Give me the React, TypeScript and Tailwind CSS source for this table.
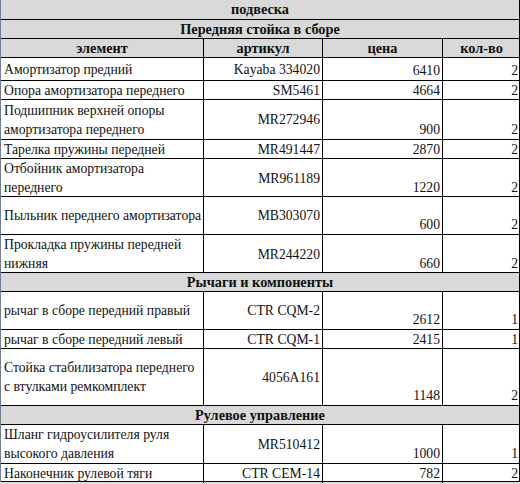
type Row =
  | { kind: "title"; text: string; h: number }
  | { kind: "head"; h: number }
  | { kind: "item"; name: string; art: string; price: string; qty: string; h: number };

const rows: Row[] = [
  { kind: "title", text: "подвеска", h: 20 },
  { kind: "title", text: "Передняя стойка в сборе", h: 19 },
  { kind: "head", h: 19 },
  { kind: "item", name: "Амортизатор предний", art: "Kayaba 334020", price: "6410", qty: "2", h: 23 },
  { kind: "item", name: "Опора амортизатора переднего", art: "SM5461", price: "4664", qty: "2", h: 19 },
  { kind: "item", name: "Подшипник верхней опоры\nамортизатора переднего", art: "MR272946", price: "900", qty: "2", h: 40 },
  { kind: "item", name: "Тарелка пружины передней", art: "MR491447", price: "2870", qty: "2", h: 19 },
  { kind: "item", name: "Отбойник амортизатора\nпереднего", art: "MR961189", price: "1220", qty: "2", h: 38 },
  { kind: "item", name: "Пыльник переднего амортизатора", art: "MB303070", price: "600", qty: "2", h: 38 },
  { kind: "item", name: "Прокладка пружины передней\nнижняя", art: "MR244220", price: "660", qty: "2", h: 38 },
  { kind: "title", text: "Рычаги и компоненты", h: 19 },
  { kind: "item", name: "рычаг в сборе передний правый", art: "CTR CQM-2", price: "2612", qty: "1", h: 38 },
  { kind: "item", name: "рычаг в сборе передний левый", art: "CTR CQM-1", price: "2415", qty: "1", h: 19 },
  { kind: "item", name: "Стойка стабилизатора переднего\nс втулками ремкомплект", art: "4056A161", price: "1148", qty: "2", h: 57 },
  { kind: "title", text: "Рулевое управление", h: 19 },
  { kind: "item", name: "Шланг гидроусилителя руля\nвысокого давления", art: "MR510412", price: "1000", qty: "1", h: 39 },
  { kind: "item", name: "Наконечник рулевой тяги", art: "CTR CEM-14", price: "782", qty: "2", h: 18 },
];

const grid = "grid grid-cols-[203px_119px_120px_77px]";

export default function App() {
  return (
    <div
      className="min-h-[484px] w-[520px] bg-[#dcdcdc] text-[13.7px] leading-[19px] text-[#111]"
      style={{ fontFamily: '"Liberation Serif", "Times New Roman", serif' }}
    >
      <div className="border-l border-r border-l-[#6f7f90] border-r-black">
        {rows.map((r, i) => {
          if (r.kind === "title") {
            return (
              <div
                key={i}
                className="flex items-center justify-center border-b border-black bg-[#d9d9d9] text-[14.3px] font-bold"
                style={{ height: r.h }}
              >
                {r.text}
              </div>
            );
          }
          if (r.kind === "head") {
            return (
              <div
                key={i}
                className={`${grid} border-b border-black bg-[#d9d9d9] text-[14.3px] font-bold`}
                style={{ height: r.h }}
              >
                <div className="flex items-center justify-center border-r border-black">элемент</div>
                <div className="flex items-center justify-center border-r border-black">артикул</div>
                <div className="flex items-center justify-center border-r border-black">цена</div>
                <div className="flex items-center justify-center">кол-во</div>
              </div>
            );
          }
          return (
            <div
              key={i}
              className={`${grid} border-b border-black bg-white`}
              style={{ height: r.h }}
            >
              <div className="flex items-center whitespace-pre-line border-r border-black pl-[3px]">
                {r.name}
              </div>
              <div className="flex items-center justify-end border-r border-black pr-[2px]">
                {r.art}
              </div>
              <div className="flex items-end justify-end border-r border-black pr-[2px]">
                {r.price}
              </div>
              <div className="flex items-end justify-end pr-[2px]">{r.qty}</div>
            </div>
          );
        })}
      </div>
    </div>
  );
}
